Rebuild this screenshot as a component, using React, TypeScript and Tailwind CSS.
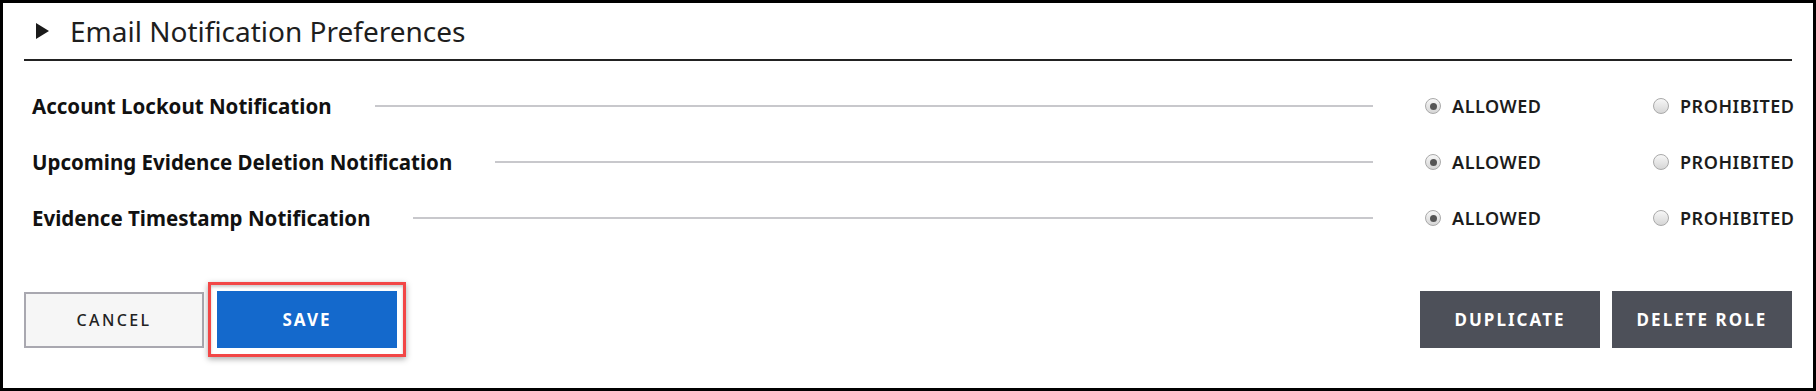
import React, { useState } from "react";

type Choice = "allowed" | "prohibited";

const ROWS = [
  { id: "lockout", label: "Account Lockout Notification" },
  { id: "deletion", label: "Upcoming Evidence Deletion Notification" },
  { id: "timestamp", label: "Evidence Timestamp Notification" },
];

function Radio({ checked, label, onClick }: { checked: boolean; label: string; onClick: () => void }) {
  return (
    <button type="button" onClick={onClick} className="flex items-center gap-[11px] whitespace-nowrap">
      <span className="flex h-[16px] w-[16px] shrink-0 items-center justify-center rounded-full border border-[#a9a9a9] bg-gradient-to-b from-[#f7f7f7] to-[#d6d6d6]">
        {checked ? <span className="h-[7px] w-[7px] rounded-full bg-[#555]" /> : null}
      </span>
      <span className="text-[18px] font-semibold leading-none tracking-[0.03em] text-[#1c1c1c]">{label}</span>
    </button>
  );
}

export default function App() {
  const [prefs, setPrefs] = useState<Record<string, Choice>>({
    lockout: "allowed",
    deletion: "allowed",
    timestamp: "allowed",
  });

  const set = (id: string, v: Choice) => setPrefs((p) => ({ ...p, [id]: v }));

  return (
    <div className="box-border h-[391px] w-full border-[3px] border-black bg-white px-[21px] font-['Noto_Sans',sans-serif]">
      <div className="flex h-[58px] items-center border-b-2 border-[#222]">
        <svg width="13" height="16" viewBox="0 0 13 16" className="ml-[12px]">
          <polygon points="0,0 13,8 0,16" fill="#1a1a1a" />
        </svg>
        <h2 className="ml-[21px] text-[28px] font-normal text-[#1e1e1e]">Email Notification Preferences</h2>
      </div>

      <div className="mt-[17px]">
        {ROWS.map((r) => (
          <div key={r.id} className="flex h-[56px] items-center pl-[8px]">
            <span className="text-[20.5px] font-bold text-[#111]">{r.label}</span>
            <div className="ml-[43px] mr-[52px] h-[2px] flex-1 bg-[#c8c8cc]" />
            <div className="w-[228px] shrink-0">
              <Radio checked={prefs[r.id] === "allowed"} label="ALLOWED" onClick={() => set(r.id, "allowed")} />
            </div>
            <div className="w-[139px] shrink-0">
              <Radio checked={prefs[r.id] === "prohibited"} label="PROHIBITED" onClick={() => set(r.id, "prohibited")} />
            </div>
          </div>
        ))}
      </div>

      <div className="mt-[36px] flex items-center">
        <button className="h-[56px] w-[180px] border-2 border-[#a9a8b0] bg-[#f6f6f6] text-[16px] font-medium tracking-[0.15em] text-[#222]">
          CANCEL
        </button>
        <div className="ml-[4px] border-[3px] border-[#f24646] p-[6px] shadow-[inset_0_2px_3px_rgba(0,0,0,0.2),0_2px_6px_rgba(0,0,0,0.35)]">
          <button className="block h-[57px] w-[180px] bg-[#1469cc] text-[17px] font-bold tracking-[0.12em] text-white">
            SAVE
          </button>
        </div>
        <div className="ml-auto flex gap-[12px]">
          <button className="h-[57px] w-[180px] bg-[#4d5059] text-[17px] font-bold tracking-[0.12em] text-white">
            DUPLICATE
          </button>
          <button className="h-[57px] w-[180px] bg-[#4d5059] text-[17px] font-bold tracking-[0.12em] text-white">
            DELETE ROLE
          </button>
        </div>
      </div>
    </div>
  );
}
